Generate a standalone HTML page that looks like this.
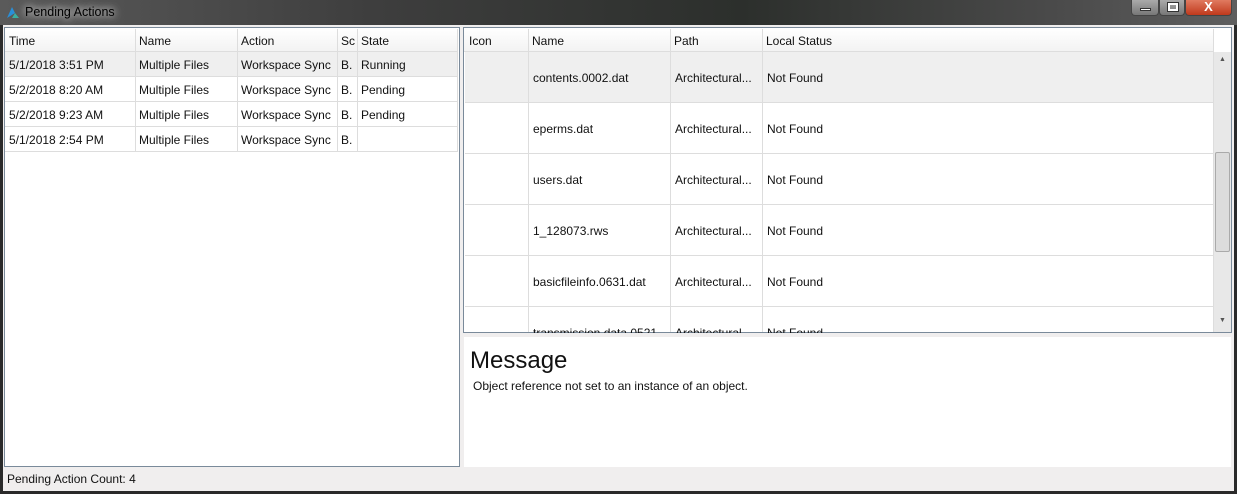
<!DOCTYPE html>
<html><head><style>
*{margin:0;padding:0;box-sizing:border-box}
body{width:1237px;height:494px;overflow:hidden;background:#2a2a2a;font-family:"Segoe UI","Liberation Sans",sans-serif;font-size:12px;color:#111;position:relative}
.tb{position:absolute;left:0;top:0;width:1237px;height:25px;background:linear-gradient(90deg,#5a5a5a,#3e3e3e 30%,#2c2f2c 60%,#4a4a4a 85%,#5e5e5e)}
.tb span{position:absolute;left:25px;top:5px;color:#000;font-size:12.5px;text-shadow:0 0 8px #ccc,0 0 8px #ccc}
.win{position:absolute;left:3px;top:25px;width:1231px;height:466px;background:#f0eeee}
.abs{position:absolute}
.cell{position:absolute;white-space:nowrap;overflow:hidden;padding-left:4px}
.btn{position:absolute;top:0;height:16px;border:1px solid #444;border-top:none;border-radius:0 0 4px 4px}
</style></head><body>
<div class="tb"><svg class="abs" style="left:5px;top:4px" width="16" height="16"><path d="M2 14 L7 3 L10 9 Z" fill="#2a8fd8"/><path d="M7 14 L10 9 L14 14Z" fill="#3bb0a0"/></svg><span>Pending Actions</span></div>
<div class="btn" style="left:1131px;width:28px;background:linear-gradient(#aaa,#777)"><div class="abs" style="left:8px;top:8px;width:11px;height:3px;background:#fff;border:1px solid #333"></div></div>
<div class="btn" style="left:1159px;width:26px;background:linear-gradient(#aaa,#777)"><div class="abs" style="left:8px;top:3px;width:10px;height:8px;border:2px solid #fff;outline:1px solid #333"></div></div>
<div class="btn" style="left:1185px;width:47px;background:linear-gradient(#e07a60,#c0391c);color:#fff;font-weight:bold;text-align:center;font-size:13px;line-height:14px">X</div>
<div class="win"></div>
<div class="abs" style="left:4px;top:27px;width:456px;height:440px;background:#fff;border:1px solid #7a8a9a"></div>
<div class="abs" style="left:5px;top:28px;width:452px;height:24px;background:linear-gradient(#fff,#f3f3f3);border-bottom:1px solid #ddd"></div>
<div id="L"></div>
<div class="abs" style="left:463px;top:27px;width:769px;height:306px;background:#fff;border:1px solid #7a8a9a"></div>
<div class="abs" style="left:464px;top:28px;width:749px;height:24px;background:linear-gradient(#fff,#f3f3f3);border-bottom:1px solid #ddd"></div>
<div class="abs" style="left:465px;top:52px;width:748px;height:51px;background:#efefef"></div>
<div class="abs" style="left:1214px;top:52px;width:17px;height:280px;background:#e8e8e8"></div>
<div class="abs" style="left:1215px;top:152px;width:15px;height:100px;background:#dcdcdc;border:1px solid #aaa;border-radius:2px"></div>
<div class="abs" style="left:1219px;top:56px;font-size:7px;color:#555">▲</div>
<div class="abs" style="left:1219px;top:317px;font-size:7px;color:#555">▼</div>
<div id="R"></div>
<div class="abs" style="left:464px;top:337px;width:767px;height:130px;background:#fff"></div>
<div class="abs" style="left:470px;top:347px;font-size:24px">Message</div>
<div class="abs" style="left:473px;top:379px;font-size:12px">Object reference not set to an instance of an object.</div>
<div class="abs" style="left:7px;top:472px;font-size:12px">Pending Action Count: 4</div>
<script>
function add(id,html){document.getElementById(id).insertAdjacentHTML('beforeend',html)}
var lc=[5,135,237,337,357,457];
var lh=['Time','Name','Action','Sc','State'];
var lr=[['5/1/2018 3:51 PM','Multiple Files','Workspace Sync','B.','Running'],['5/2/2018 8:20 AM','Multiple Files','Workspace Sync','B.','Pending'],['5/2/2018 9:23 AM','Multiple Files','Workspace Sync','B.','Pending'],['5/1/2018 2:54 PM','Multiple Files','Workspace Sync','B.','']];
var s='';
s+='<div class="abs" style="left:5px;top:52px;width:452px;height:25px;background:#efefef"></div>';
for(var i=0;i<5;i++){s+='<div class="cell" style="left:'+lc[i]+'px;top:34px;width:'+(lc[i+1]-lc[i])+'px">'+lh[i]+'</div>';
 s+='<div class="abs" style="left:'+lc[i+1]+'px;top:29px;width:1px;height:123px;background:#ddd"></div>';}
for(var r=0;r<4;r++){var y=52+r*25;s+='<div class="abs" style="left:5px;top:'+(y+24)+'px;width:452px;height:1px;background:#ddd"></div>';
 for(var i=0;i<5;i++)s+='<div class="cell" style="left:'+lc[i]+'px;top:'+(y+6)+'px;width:'+(lc[i+1]-lc[i]-2)+'px">'+lr[r][i]+'</div>';}
add('L',s);
var rc=[465,528,670,762,1213];var rh=['Icon','Name','Path','Local Status'];
var rn=['contents.0002.dat','eperms.dat','users.dat','1_128073.rws','basicfileinfo.0631.dat','transmission.data.0521'];
s='';
for(var i=0;i<4;i++){s+='<div class="cell" style="left:'+rc[i]+'px;top:34px">'+rh[i]+'</div>';
 s+='<div class="abs" style="left:'+rc[i+1]+'px;top:29px;width:1px;height:303px;background:#ddd"></div>';}
for(var r=0;r<6;r++){var y=52+r*51;
 if(r<5)s+='<div class="abs" style="left:465px;top:'+(y+50)+'px;width:748px;height:1px;background:#ddd"></div>';
 s+='<div class="cell" style="left:529px;top:'+(y+19)+'px;width:140px;'+(r==5?'height:7px':'')+'">'+rn[r]+'</div>';
 s+='<div class="cell" style="left:671px;top:'+(y+19)+'px;width:90px;'+(r==5?'height:7px':'')+'">Architectural...</div>';
 s+='<div class="cell" style="left:763px;top:'+(y+19)+'px;'+(r==5?'height:7px':'')+'">Not Found</div>';}
add('R',s);
</script>
</body></html>
